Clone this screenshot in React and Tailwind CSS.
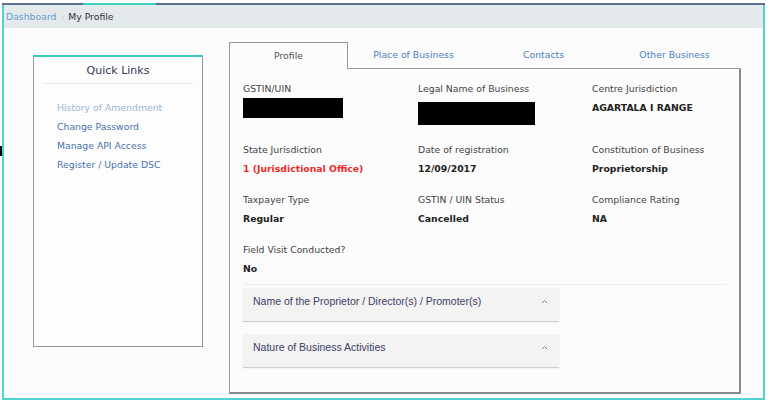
import React from 'react';

const font = { fontFamily: '"DejaVu Sans", Verdana, sans-serif' };

const Field = ({ label, children }) => (
    <div>
        <div className='text-[9.3px] leading-[12px] text-[#444]'>{label}</div>
        {children}
    </div>
);

const Value = ({ children, red }) => (
    <div className={`mt-[7px] text-[9.3px] leading-[12px] font-bold ${red ? 'text-[#ee2a2a]' : 'text-[#222]'}`}>{children}</div>
);

const Accordion = ({ title }) => (
    <div className='w-[316px] h-[33px] bg-[#f3f3f3] shadow-[0_1px_1px_rgba(0,0,0,0.18)] flex items-start justify-between pl-[10px] pr-[10px] pt-[7px]'>
        <span className='text-[10.5px] leading-[13px] text-[#3a4166]' style={{ fontFamily: '"Liberation Sans", Arial, sans-serif' }}>{title}</span>
        <svg width="7" height="5" viewBox="0 0 7 5" className='mt-[4px] mr-[1px]'>
            <path d="M1 4 L3.5 1.5 L6 4" fill="none" stroke="#888" strokeWidth="1" />
        </svg>
    </div>
);

const App = () => {
    const links = ['Change Password', 'Manage API Access', 'Register / Update DSC'];

    return (
        <div className='w-[768px] h-[404px] bg-white relative overflow-hidden' style={font}>
            {/* stray mark on the left edge */}
            <div className='absolute left-0 top-[146px] w-[2px] h-[10px] bg-black'></div>

            <div className='ml-[2px] w-[763px] pt-[3px]'>
                <div className='h-[2px] bg-[#5d6d96] flex'>
                    <div className='ml-[81px] w-[73px] bg-[#3fd3c6]'></div>
                </div>

                <div className='h-[395px] border-x-2 border-b-2 border-[#4fd3d3] bg-[#fbfcfb] flex flex-col'>
                    {/* breadcrumb */}
                    <div className='h-[23px] bg-[#e4e9eb] flex items-center pl-[2px] text-[9.3px]'>
                        <span className='text-[#6a9bd0]'>Dashboard</span>
                        <span className='text-[#c3c8cc] mx-[4px]'>›</span>
                        <span className='text-[#333]'>My Profile</span>
                    </div>

                    <div className='flex items-start'>
                        {/* Quick Links */}
                        <div className='ml-[29px] mt-[27px] w-[170px] h-[292px] border border-[#999] border-t-2 border-t-[#3cc9c2] bg-[#fcfdfc]'>
                            <div className='mt-[7px] text-center text-[11px] leading-[14px] text-[#333a55]'>Quick Links</div>
                            <div className='mx-[9px] mt-[5px] border-t border-[#ececec]'></div>
                            <div className='pl-[23px] pt-[18px] flex flex-col gap-[7px] text-[9.3px] leading-[12px]'>
                                <span className='text-[#9fb4d4]'>History of Amendment</span>
                                {links.map(l => (
                                    <span key={l} className='text-[#4b72ac]'>{l}</span>
                                ))}
                            </div>
                        </div>

                        {/* Profile panel */}
                        <div className='ml-[26px] mt-[14px] w-[512px]'>
                            <div className='grid grid-cols-[119px_131px_129px_1fr] h-[27px] text-[9.3px]'>
                                <div className='border-t border-x border-[#999] flex items-center justify-center text-[#555]'>Profile</div>
                                <div className='border-b border-[#999] flex items-center justify-center text-[#4d7fc0]'>Place of Business</div>
                                <div className='border-b border-[#999] flex items-center justify-center text-[#4d7fc0]'>Contacts</div>
                                <div className='border-b border-[#999] flex items-center justify-center text-[#4d7fc0]'>Other Business</div>
                            </div>

                            <div className='h-[325px] border-l border-r-2 border-b-2 border-l-[#999] border-r-[#8a8a8a] border-b-[#8a8a8a] px-[13px] pt-[14px]'>
                                <div className='grid grid-cols-[175px_174px_1fr] gap-y-[19px]'>
                                    <Field label='GSTIN/UIN'>
                                        <div className='mt-[3px] w-[100px] h-[20px] bg-black'></div>
                                    </Field>
                                    <Field label='Legal Name of Business'>
                                        <div className='mt-[7px] w-[117px] h-[23px] bg-black'></div>
                                    </Field>
                                    <Field label='Centre Jurisdiction'>
                                        <Value>AGARTALA I RANGE</Value>
                                    </Field>

                                    <Field label='State Jurisdiction'>
                                        <Value red>1 (Jurisdictional Office)</Value>
                                    </Field>
                                    <Field label='Date of registration'>
                                        <Value>12/09/2017</Value>
                                    </Field>
                                    <Field label='Constitution of Business'>
                                        <Value>Proprietorship</Value>
                                    </Field>

                                    <Field label='Taxpayer Type'>
                                        <Value>Regular</Value>
                                    </Field>
                                    <Field label='GSTIN / UIN Status'>
                                        <Value>Cancelled</Value>
                                    </Field>
                                    <Field label='Compliance Rating'>
                                        <Value>NA</Value>
                                    </Field>

                                    <Field label='Field Visit Conducted?'>
                                        <Value>No</Value>
                                    </Field>
                                </div>

                                <div className='mt-[9px] border-t border-[#efefef]'></div>
                                <div className='mt-[3px] flex flex-col gap-[13px]'>
                                    <Accordion title='Name of the Proprietor / Director(s) / Promoter(s)' />
                                    <Accordion title='Nature of Business Activities' />
                                </div>
                            </div>
                        </div>
                    </div>
                </div>
            </div>
        </div>
    );
};

export default App;
